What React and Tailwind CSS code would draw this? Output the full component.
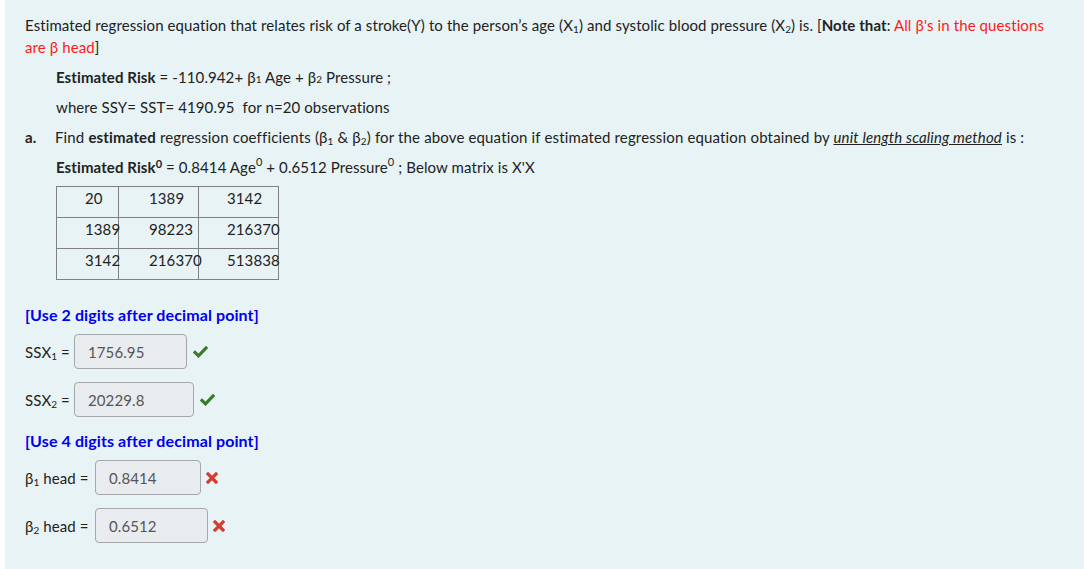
import React from "react";

const font = { fontFamily: 'Lato, "Open Sans", sans-serif' };

function Check() {
  return (
    <svg width="15" height="12" viewBox="0 0 15 12" className="ml-[6px]">
      <path d="M2 6.5 L5.5 9.8 L13 2" fill="none" stroke="#3a7a2c" strokeWidth="3.2" strokeLinecap="square" strokeLinejoin="miter" />
    </svg>
  );
}

function Cross() {
  return (
    <svg width="12" height="12" viewBox="0 0 12 12" className="ml-[5px]">
      <path d="M2 2 L10 10 M10 2 L2 10" fill="none" stroke="#d63b2f" strokeWidth="3.2" strokeLinecap="square" />
    </svg>
  );
}

function Sub({ children }) {
  return <sub className="text-[10px] relative top-[2px] align-baseline">{children}</sub>;
}

function Sup({ children }) {
  return <sup className="text-[11px] relative top-[-5px] align-baseline">{children}</sup>;
}

function Field({ label, labelW, boxW, value, ok }) {
  return (
    <div className="flex items-center h-[35px]">
      <div className={labelW}>{label}</div>
      <div className={`${boxW} h-[35px] rounded-[4px] border border-[#a4a8ab] bg-[#e9ecef] text-[#555] flex items-center pl-[13px]`}>
        {value}
      </div>
      {ok ? <Check /> : <Cross />}
    </div>
  );
}

export default function App() {
  return (
    <div className="w-[1084px] h-[569px] bg-white pl-[5px]" style={font}>
      <div className="h-full bg-[#e7f3f5] pl-[20px] pt-[14px] text-[15px] leading-[22px] text-[#222] tracking-[0.1px]">
        <div>
          <div className="whitespace-nowrap">
            Estimated regression equation that relates risk of a stroke(Y) to the person’s age (X<Sub>1</Sub>) and systolic blood pressure (X<Sub>2</Sub>) is. [<b>Note that</b>: <span className="text-[#ff1a1a]">All β's in the questions</span>
          </div>
          <div>
            <span className="text-[#ff1a1a]">are β head</span>]
          </div>
        </div>
        <div className="mt-[4px]">
          <div className="h-[30px] flex items-center pl-[31px] whitespace-pre">
            <b>Estimated Risk</b> = -110.942+ β<Sub>1</Sub> Age + β<Sub>2</Sub> Pressure ;
          </div>
          <div className="h-[30px] flex items-center pl-[31px] whitespace-pre">
            where SSY= SST= 4190.95  for n=20 observations
          </div>
          <div className="h-[30px] flex items-center">
            <b className="w-[30px]">a.</b>
            <span className="whitespace-pre tracking-[0.15px]">
              Find <b>estimated</b> regression coefficients (β<Sub>1</Sub> &amp; β<Sub>2</Sub>) for the above equation if estimated regression equation obtained by <i className="underline">unit length scaling method</i> is :
            </span>
          </div>
          <div className="h-[30px] flex items-center pl-[31px] whitespace-pre">
            <b>Estimated Risk<Sup>0</Sup></b> = 0.8414 Age<Sup>0</Sup> + 0.6512 Pressure<Sup>0</Sup> ; Below matrix is X'X
          </div>
        </div>
        <table className="ml-[31px] mt-[4px] border-collapse table-fixed w-[222px]">
          <colgroup>
            <col className="w-[62px]" />
            <col className="w-[80px]" />
            <col className="w-[80px]" />
          </colgroup>
          <tbody>
            {[
              ["20", "1389", "3142"],
              ["1389", "98223", "216370"],
              ["3142", "216370", "513838"],
            ].map((row, i) => (
              <tr key={i} className="h-[31px]">
                <td className="border border-[#808080] pl-[28px] p-0 align-top whitespace-nowrap">{row[0]}</td>
                <td className="border border-[#808080] pl-[30px] p-0 align-top whitespace-nowrap">{row[1]}</td>
                <td className="border border-[#808080] pl-[28px] p-0 align-top whitespace-nowrap">{row[2]}</td>
              </tr>
            ))}
          </tbody>
        </table>
        <div className="mt-[24px] font-bold text-[16px] text-[#0000f0]">[Use 2 digits after decimal point]</div>
        <div className="mt-[8px]">
          <Field label={<>SSX<Sub>1</Sub> =</>} labelW="w-[49px]" boxW="w-[113px]" value="1756.95" ok />
        </div>
        <div className="mt-[13px]">
          <Field label={<>SSX<Sub>2</Sub> =</>} labelW="w-[49px]" boxW="w-[120px]" value="20229.8" ok />
        </div>
        <div className="mt-[13px] font-bold text-[16px] text-[#0000f0]">[Use 4 digits after decimal point]</div>
        <div className="mt-[8px]">
          <Field label={<>β<Sub>1</Sub> head =</>} labelW="w-[70px]" boxW="w-[106px]" value="0.8414" />
        </div>
        <div className="mt-[13px]">
          <Field label={<>β<Sub>2</Sub> head =</>} labelW="w-[70px]" boxW="w-[113px]" value="0.6512" />
        </div>
      </div>
    </div>
  );
}
